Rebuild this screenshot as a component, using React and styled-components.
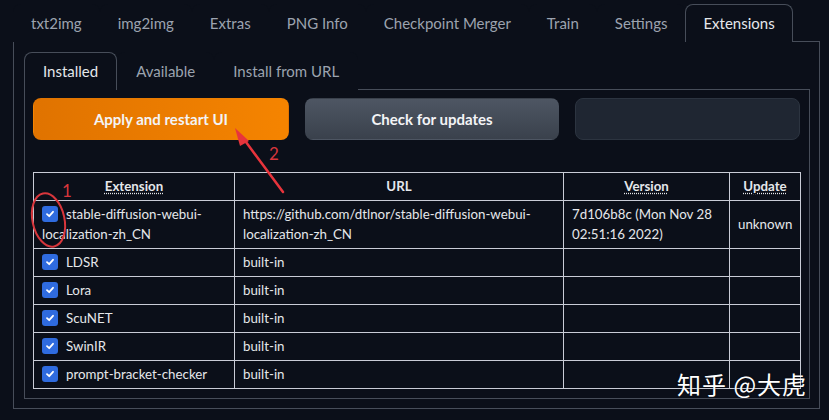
import React from 'react';
import styled, { createGlobalStyle } from 'styled-components';

const GlobalStyle = createGlobalStyle`
  html, body {
    margin: 0;
    padding: 0;
    background: #0b0f19;
  }
  body {
    font-family: Lato, "Noto Sans", sans-serif;
    color: #d1d5db;
  }
  * { box-sizing: border-box; }
`;

const Page = styled.div`
  position: relative;
  width: 829px;
  height: 420px;
  padding: 0 9px 0 13px;
  background: #0b0f19;
  overflow: hidden;
`;

const TabBar = styled.div`
  display: flex;
  align-items: flex-end;
  height: ${({ $h }) => $h}px;
`;

const Tab = styled.div`
  position: relative;
  z-index: 1;
  height: ${({ $h }) => $h}px;
  margin-bottom: -1px;
  padding: 0 ${({ $padX }) => $padX}px 2px;
  display: flex;
  align-items: center;
  font-size: ${({ $size }) => $size}px;
  color: ${({ $active }) => ($active ? '#e5e7eb' : '#9ca3af')};
  border: 1px solid ${({ $active }) => ($active ? '#474d59' : 'transparent')};
  border-bottom: none;
  border-radius: 8px 8px 0 0;
  background: #0b0f19;
  white-space: nowrap;
`;

const Panel = styled.div`
  border: 1px solid #474d59;
  padding: ${({ $pad }) => $pad};
`;

const ButtonRow = styled.div`
  display: grid;
  grid-template-columns: 256px 254px 1fr;
  gap: 16px;
  height: 42px;
`;

const Button = styled.div`
  display: flex;
  align-items: center;
  justify-content: center;
  border-radius: 8px;
  font-size: 15px;
  font-weight: 700;
  color: #f3f4f6;
  background: ${({ $kind }) =>
    $kind === 'primary'
      ? 'linear-gradient(90deg, #e07300, #f58400)'
      : $kind === 'secondary'
      ? 'linear-gradient(180deg, #4e5663, #3a414c)'
      : '#1f2632'};
  border: 1px solid ${({ $kind }) => ($kind === 'empty' ? '#2c3440' : 'transparent')};
`;

const Table = styled.table`
  margin-top: 32px;
  width: 768px;
  table-layout: fixed;
  border-collapse: collapse;
  font-size: 13.3px;
  line-height: 20px;
  color: #e5e7eb;
`;

const Th = styled.th`
  padding: 3px 8px 4px;
  border: 1px solid #c9ccd6;
  font-weight: 700;
  text-align: center;
  width: ${({ $w }) => ($w ? `${$w}px` : 'auto')};

  abbr {
    text-decoration: underline dotted;
    text-underline-offset: 2px;
  }
`;

const Td = styled.td`
  padding: 3px 8px 4px;
  border: 1px solid #c9ccd6;
  vertical-align: middle;
`;

const Check = styled.span`
  display: inline-block;
  width: 16px;
  height: 16px;
  margin: 2px 8px 0 0;
  vertical-align: top;
  border-radius: 3px;
  background: #2f6bdf;

  svg { display: block; margin: 3px; }
`;

const Overlay = styled.svg`
  position: absolute;
  left: 0;
  top: 0;
  pointer-events: none;
`;

const Watermark = styled.div`
  position: absolute;
  left: 677px;
  top: 366px;
  font-family: "Noto Sans CJK SC", "Noto Sans", sans-serif;
  font-size: 24px;
  color: #ffffff;
  letter-spacing: 1px;
  text-shadow: 0 0 2px rgba(0, 0, 0, 0.6);
`;

const topTabs = ['txt2img', 'img2img', 'Extras', 'PNG Info', 'Checkpoint Merger', 'Train', 'Settings', 'Extensions'];
const innerTabs = ['Installed', 'Available', 'Install from URL'];

const rows = [
  { name: 'stable-diffusion-webui-localization-zh_CN', url: 'https://github.com/dtlnor/stable-diffusion-webui-localization-zh_CN', version: '7d106b8c (Mon Nov 28 02:51:16 2022)', update: 'unknown' },
  { name: 'LDSR', url: 'built-in' },
  { name: 'Lora', url: 'built-in' },
  { name: 'ScuNET', url: 'built-in' },
  { name: 'SwinIR', url: 'built-in' },
  { name: 'prompt-bracket-checker', url: 'built-in' },
];

function CheckBox() {
  return (
    <Check>
      <svg width="10" height="10" viewBox="0 0 10 10">
        <path d="M2 5.2 L4.2 7.2 L8 2.8" fill="none" stroke="#fff" strokeWidth="1.8" strokeLinecap="round" strokeLinejoin="round" />
      </svg>
    </Check>
  );
}

export default function App() {
  return (
    <Page>
      <GlobalStyle />
      <TabBar $h={41}>
        {topTabs.map(t => (
          <Tab key={t} $h={38} $size={15} $padX={17} $active={t === 'Extensions'}>{t}</Tab>
        ))}
      </TabBar>
      <Panel $pad="9px 9px 9px 10px">
        <TabBar $h={38}>
          {innerTabs.map(t => (
            <Tab key={t} $h={38} $size={15} $padX={18} $active={t === 'Installed'}>{t}</Tab>
          ))}
        </TabBar>
        <Panel $pad="8px 9px 9px 8px">
          <ButtonRow>
            <Button $kind="primary">Apply and restart UI</Button>
            <Button $kind="secondary">Check for updates</Button>
            <Button $kind="empty" />
          </ButtonRow>
          <Table>
            <thead>
              <tr>
                <Th $w={201}><abbr>Extension</abbr></Th>
                <Th $w={329}>URL</Th>
                <Th $w={166}><abbr>Version</abbr></Th>
                <Th><abbr>Update</abbr></Th>
              </tr>
            </thead>
            <tbody>
              {rows.map(r => (
                <tr key={r.name}>
                  <Td><CheckBox />{r.name}</Td>
                  <Td>{r.url}</Td>
                  <Td>{r.version}</Td>
                  <Td>{r.update}</Td>
                </tr>
              ))}
            </tbody>
          </Table>
        </Panel>
      </Panel>

      <Overlay width="829" height="420" viewBox="0 0 829 420">
        <ellipse cx="48.5" cy="220" rx="16" ry="27" transform="rotate(-12 48.5 220)" fill="none" stroke="#d8363c" strokeWidth="2" />
        <text x="62" y="197" fill="#d8363c" fontSize="17" fontFamily="Lato, sans-serif">1</text>
        <text x="269" y="160" fill="#d8363c" fontSize="17" fontFamily="Lato, sans-serif">2</text>
        <line x1="283" y1="192" x2="243" y2="138" stroke="#e8343c" strokeWidth="2.5" strokeLinecap="round" />
        <polygon points="235,128 249,141 240,146" fill="#e8343c" />
      </Overlay>
      <Watermark>知乎 @大虎</Watermark>
    </Page>
  );
}
